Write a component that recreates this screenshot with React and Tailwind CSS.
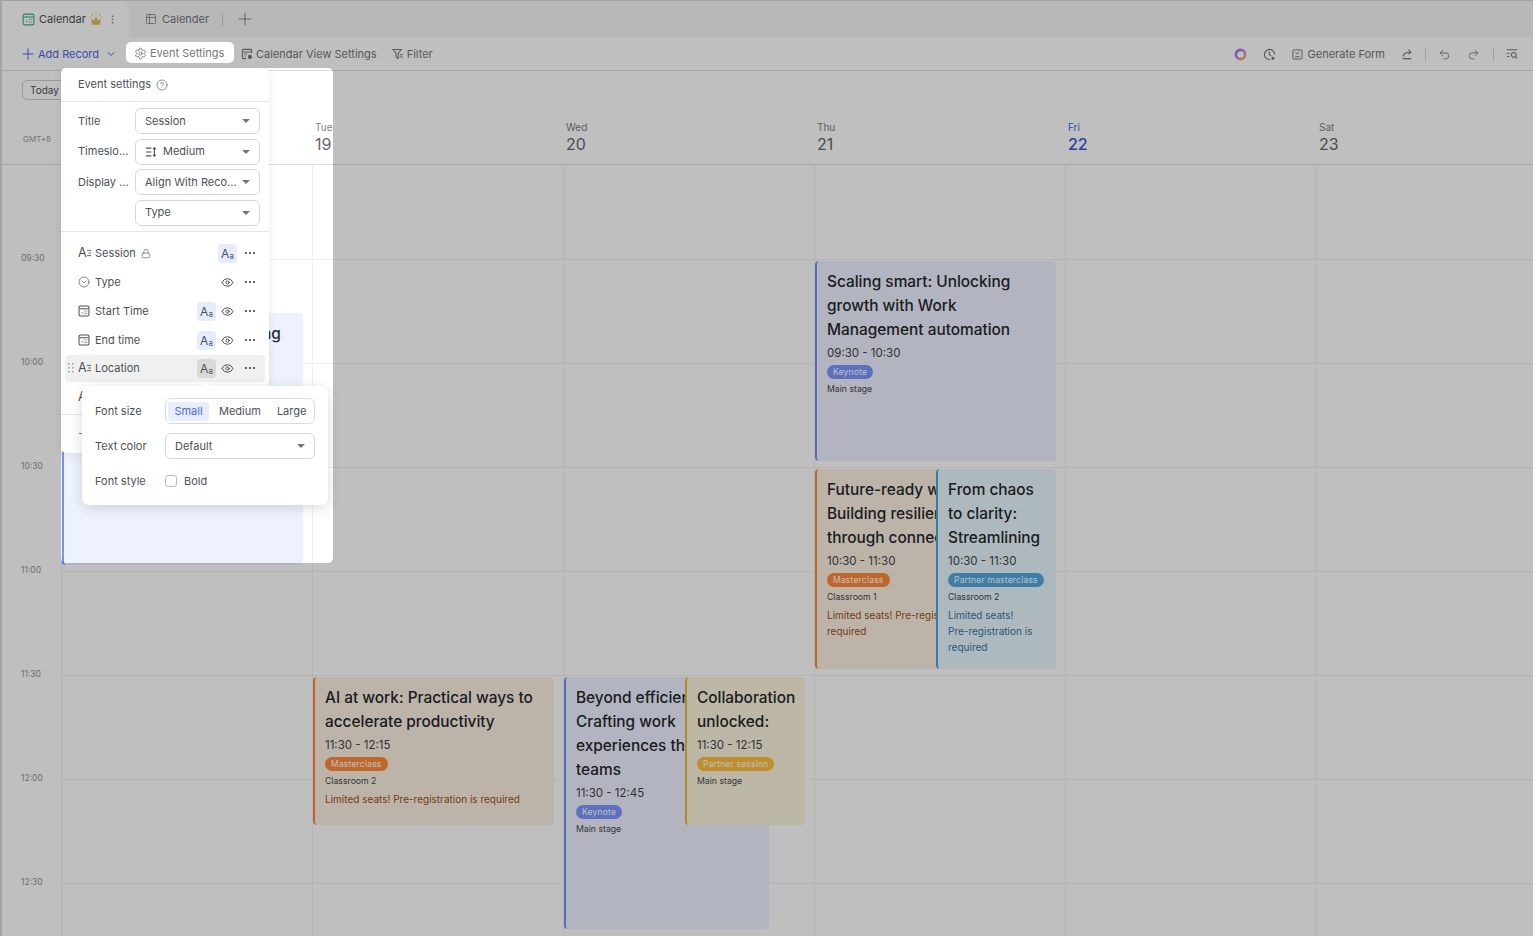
import React from "react";
import {
  Plus, ChevronDown, Settings, Undo2, Redo2, Eye, Lock, Ellipsis, CircleHelp, CircleChevronDown,
  Table2, EllipsisVertical,
} from "lucide-react";

const font = { fontFamily: "Inter, 'Noto Sans', sans-serif" };

function CalIcon({ className = "" }) {
  return (
    <svg viewBox="0 0 14 14" className={className} fill="none" stroke="currentColor" strokeWidth="1.2">
      <rect x="1.2" y="1.2" width="11.6" height="11.6" rx="1.6" />
      <path d="M1.5 4.4h11" />
      <path d="M4.2 9h1.4M7.6 7h1.2M7.6 9.8h1.2M10 7h.8M10 9.8h.8" strokeWidth="1.3" />
    </svg>
  );
}

function Crown() {
  return (
    <svg viewBox="0 0 14 14" className="w-[14px] h-[14px] ml-[3px]">
      <path d="M3 12.8h8l1-6.4-2.8 2L7 4.2 4.8 8.4 2 6.4z" fill="#e6bf5e" />
      <path d="M7 .4v2.6M2.2 1.6l1.4 2.2M11.8 1.6l-1.4 2.2M.4 4.6l1.7.7M13.6 4.6l-1.7.7" stroke="#f3dd9e" strokeWidth="1.4" />
    </svg>
  );
}

function FilterIcon() {
  return (
    <svg viewBox="0 0 14 14" className="w-[12px] h-[12px]" fill="none" stroke="currentColor" strokeWidth="1.2">
      <path d="M1.2 1.8h9.6L7.2 6.4v5.8L4.8 10.6V6.4zM9 8h3.6M9 10.4h3.6" />
    </svg>
  );
}

function CalSettingsIcon() {
  return (
    <svg viewBox="0 0 14 14" className="w-[12px] h-[12px]" fill="none" stroke="currentColor" strokeWidth="1.2">
      <path d="M6 12.4H2.6a1 1 0 0 1-1-1V2.6a1 1 0 0 1 1-1h8.8a1 1 0 0 1 1 1V6" />
      <path d="M1.6 4.6h10.8M4 7h3M4 9.4h1.6" />
      <circle cx="10.4" cy="10.4" r="1.8" fill="currentColor" />
    </svg>
  );
}

function Ring() {
  return (
    <svg viewBox="0 0 14 14" className="w-[13px] h-[13px]" fill="none">
      <defs>
        <linearGradient id="ringGrad" x1="0" y1="0" x2="1" y2="1">
          <stop offset="0" stopColor="#8a70f5" />
          <stop offset="0.5" stopColor="#cf8ad8" />
          <stop offset="1" stopColor="#ffa65c" />
        </linearGradient>
      </defs>
      <circle cx="7" cy="7" r="5" stroke="url(#ringGrad)" strokeWidth="2.8" />
    </svg>
  );
}

function ClockPlay() {
  return (
    <svg viewBox="0 0 14 14" className="w-[13px] h-[13px]" fill="none" stroke="currentColor" strokeWidth="1.2">
      <path d="M7.6 12.4A5.5 5.5 0 1 1 12.5 7" />
      <path d="M6.8 3.8v3.4l2 1.2" />
      <path d="M9.6 9.4l3 1.6-3 1.8z" fill="currentColor" strokeWidth="0.6" />
    </svg>
  );
}

function FormIcon() {
  return (
    <svg viewBox="0 0 14 14" className="w-[11px] h-[11px]" fill="none" stroke="currentColor" strokeWidth="1.2">
      <rect x="1.2" y="1.2" width="11.6" height="11.6" rx="1.2" />
      <path d="M4.2 4.4l2 2 3.4-2.8M4 9.8h6" />
    </svg>
  );
}

function ShareIcon() {
  return (
    <svg viewBox="0 0 14 14" className="w-[12px] h-[12px]" fill="none" stroke="currentColor" strokeWidth="1.2">
      <path d="M2 12.4h10M2.4 9.8C3 6.6 5.6 4.8 11 4.6M8.6 1.8 11.6 4.6 8.8 7.4" />
    </svg>
  );
}

function SearchList() {
  return (
    <svg viewBox="0 0 14 14" className="w-[12px] h-[12px]" fill="none" stroke="currentColor" strokeWidth="1.2">
      <path d="M1 2h12M1 6h3M1 10h3" />
      <circle cx="9" cy="8" r="2.8" />
      <path d="M11 10.2l1.8 1.8" />
    </svg>
  );
}

function DensityIcon() {
  return (
    <svg viewBox="0 0 14 14" className="w-[12px] h-[12px]" fill="none" stroke="currentColor" strokeWidth="1.3">
      <path d="M1 2.5h6.5M1 7h6.5M1 11.5h6.5M11 2v10M9.4 3.6 11 2l1.6 1.6M9.4 10.4 11 12l1.6-1.6" />
    </svg>
  );
}

function Grip({ className = "" }) {
  return (
    <svg viewBox="0 0 6 12" className={className} fill="currentColor">
      <rect x="0" y="1" width="1.6" height="1.6" /><rect x="4" y="1" width="1.6" height="1.6" />
      <rect x="0" y="5" width="1.6" height="1.6" /><rect x="4" y="5" width="1.6" height="1.6" />
      <rect x="0" y="9" width="1.6" height="1.6" /><rect x="4" y="9" width="1.6" height="1.6" />
    </svg>
  );
}

function TextFieldIcon() {
  return (
    <span className="flex items-center w-[13px] mr-[4px] text-[12.5px] leading-none text-[#4d5156]">
      <span>A</span>
      <svg viewBox="0 0 5 8" className="w-[5px] h-[8px]" stroke="currentColor" strokeWidth="1">
        <path d="M0 1h5M1.5 4h3.5M0 7h5" />
      </svg>
    </span>
  );
}

function Caret() {
  return <span className="ml-auto w-0 h-0 border-x-[4px] border-x-transparent border-t-[4px] border-t-[#73777d]" />;
}

const hours = ["09:30", "10:00", "10:30", "11:00", "11:30", "12:00", "12:30"];
const days = [
  { d: "Mon", n: "18" },
  { d: "Tue", n: "19" },
  { d: "Wed", n: "20" },
  { d: "Thu", n: "21" },
  { d: "Fri", n: "22", today: true },
  { d: "Sat", n: "23" },
];

const tone = {
  blue: { card: "bg-[#eef2ff] border-l-[#7490fa]", pill: "bg-[#7b96ff]", note: "text-[#4a6df5]" },
  orange: { card: "bg-[#fcf1e2] border-l-[#f58a3a]", pill: "bg-[#ff8a3a]", note: "text-[#9c4f18]" },
  cyan: { card: "bg-[#e9f7fe] border-l-[#4fa6dc]", pill: "bg-[#53a9e0]", note: "text-[#2f76ab]" },
  yellow: { card: "bg-[#fdf4dc] border-l-[#f0b638]", pill: "bg-[#ffbe3d]", note: "text-[#a87b16]" },
};

const events = [
  { col: 2, row: 3, span: 5, t: "blue", place: "ml-px mr-[9px]", title: "Welcome: Future of working together at scale", time: "09:45 - 11:00", tag: "Keynote", loc: "Main stage" },
  { col: 5, row: 2, span: 4, t: "blue", place: "ml-px mr-[9px]", title: "Scaling smart: Unlocking growth with Work Management automation", time: "09:30 - 10:30", tag: "Keynote", loc: "Main stage" },
  { col: 5, row: 6, span: 4, t: "orange", place: "ml-px mr-[45px]", title: "Future-ready work: Building resilience through connection", time: "10:30 - 11:30", tag: "Masterclass", loc: "Classroom 1", note: true },
  { col: 5, row: 6, span: 4, t: "cyan", place: "ml-[122px] mr-[9px] z-10", title: "From chaos to clarity: Streamlining", time: "10:30 - 11:30", tag: "Partner masterclass", loc: "Classroom 2", note: true },
  { col: 3, row: 10, span: 3, t: "orange", place: "ml-px mr-[9px]", title: "AI at work: Practical ways to accelerate productivity", time: "11:30 - 12:15", tag: "Masterclass", loc: "Classroom 2", note: true },
  { col: 4, row: 10, span: 5, t: "blue", place: "ml-px mr-[45px]", title: "Beyond efficiency: Crafting work experiences that inspire teams", time: "11:30 - 12:45", tag: "Keynote", loc: "Main stage" },
  { col: 4, row: 10, span: 3, t: "yellow", place: "ml-[122px] mr-[9px] z-10", title: "Collaboration unlocked:", time: "11:30 - 12:15", tag: "Partner session", loc: "Main stage" },
];

function EventCard({ e }) {
  const c = tone[e.t];
  return (
    <div
      style={{ gridColumn: e.col, gridRow: `${e.row} / span ${e.span}` }}
      className={`relative mt-[2px] mb-[6px] rounded-[4px] border-l-2 pl-[10px] pr-[10px] pt-[9px] overflow-hidden ${c.card} ${e.place}`}
    >
      <div className="text-[15.4px] leading-[24px] font-medium text-[#24272c]">{e.title}</div>
      <div className="text-[11.5px] leading-[22px] text-[#3f4349]">{e.time}</div>
      <div className="flex mt-px">
        <span className={`h-[14px] px-[6px] rounded-full text-[8.5px] leading-[14px] text-white tracking-[0.2px] whitespace-nowrap ${c.pill}`}>{e.tag}</span>
      </div>
      <div className="mt-[2px] text-[8.7px] leading-[17px] text-[#43474d]">{e.loc}</div>
      {e.note && (
        <div className={`mt-px text-[10px] leading-[16px] ${c.note}`}>
          Limited seats! <span className="whitespace-nowrap">Pre-registration</span> is required
        </div>
      )}
    </div>
  );
}

function Select({ children }) {
  return (
    <div className="flex items-center h-[26px] w-[125px] px-[9px] rounded-[6px] border border-[#d4d7db] text-[11px] text-[#4d5156] bg-white">
      {children}
      <Caret />
    </div>
  );
}

function Aa({ active, tone: t = "bg-[#e6ebff]" }) {
  return (
    <span className={`flex items-end justify-center w-[19px] h-[19px] rounded-[4px] text-[#4d5156] pb-[3px] ${active ? t : ""}`}>
      <span className="text-[12px] leading-none">A</span>
      <span className="text-[8px] leading-none">a</span>
    </span>
  );
}

function FieldRow({ icon, name, lock, aa, eye, hover }) {
  return (
    <div className={`flex items-center h-[27px] mx-[4px] pl-[3px] pr-[8px] rounded-[4px] text-[11px] text-[#4d5156] ${hover ? "-mt-px bg-[#f0f0f0]" : ""}`}>
      <Grip className={`w-[6px] h-[12px] mr-[4px] text-[#a3a6aa] ${hover ? "" : "invisible"}`} />
      {icon}
      <span>{name}</span>
      {lock && <Lock className="w-[10px] h-[11px] ml-[5px] text-[#5f6368]" strokeWidth={1.6} />}
      <span className="ml-auto flex items-center">
        {aa && <Aa active tone={hover ? "bg-[#d9d9d9]" : "bg-[#e6ebff]"} />}
        {eye && <Eye className="w-[13px] h-[13px] ml-[5px] text-[#3f4349]" strokeWidth={1.7} />}
        <Ellipsis className={`w-[14px] h-[14px] text-[#3f4349] ${eye ? "ml-[9px]" : "ml-[6px]"}`} strokeWidth={1.8} />
      </span>
    </div>
  );
}

const dateIcon = <CalIcon className="w-[12px] h-[12px] mr-[5px] text-[#4d5156]" />;

export default function App() {
  const cells = [];
  for (let c = 0; c < 6; c++) {
    cells.push(<div key={`top${c}`} style={{ gridColumn: c + 2, gridRow: 1 }} className="border-l border-[#f0f0f0]" />);
    hours.forEach((h, i) => {
      cells.push(
        <div key={`${c}-${i}`} style={{ gridColumn: c + 2, gridRow: `${2 + i * 2} / span 2` }} className="border-l border-t border-[#f0f0f0]" />
      );
    });
  }
  return (
    <div style={font} className="relative w-[1533px] h-[936px] overflow-hidden bg-white">
      <div className="flex flex-col h-full border-l-2 border-t border-[#d8d8d8]">
        <div className="flex items-stretch h-[36px] bg-[#f6f6f6] shrink-0">
          <div className="flex items-center w-[127px] pl-[20px] bg-white rounded-tr-[8px] text-[11px] text-[#4d5156]">
            <CalIcon className="w-[13px] h-[13px] mr-[4px] text-[#3fa88f]" />
            <span>Calendar</span>
            <Crown />
            <EllipsisVertical className="w-[11px] h-[11px] ml-[4px] text-[#8b8f94]" />
          </div>
          <div className="flex items-center pl-[16px] text-[11px] text-[#73777d]">
            <Table2 className="w-[12px] h-[12px] mr-[5px]" strokeWidth={1.5} />
            <span>Calender</span>
            <span className="w-px h-[13px] bg-[#cfcfcf] ml-[13px] mr-[15px]" />
            <Plus className="w-[20px] h-[20px] -ml-[3px]" strokeWidth={1.1} />
          </div>
        </div>
        <div className="relative flex items-center h-[34px] shrink-0 pl-[21px] pr-[15px] pt-px border-b border-[#dddddd] text-[11px] text-[#73777d]">
          <span className="flex items-center text-[#4a68e8]">
            <Plus className="w-[18px] h-[18px] -ml-[4px] mr-px" strokeWidth={1.4} />
            <span>Add Record</span>
            <ChevronDown className="w-[12px] h-[12px] ml-[6px]" strokeWidth={2} />
          </span>
          <span className="w-[108px] ml-[10px]" />
          <span className="flex items-center gap-[3px] ml-[6px]"><CalSettingsIcon />Calendar View Settings</span>
          <span className="flex items-center gap-[3px] ml-[15px]"><FilterIcon />Filter</span>
          <span className="ml-auto flex items-center">
            <Ring />
            <span className="ml-[16px]"><ClockPlay /></span>
            <span className="flex items-center gap-[5px] ml-[16px]"><FormIcon />Generate Form</span>
            <span className="ml-[16px]"><ShareIcon /></span>
            <span className="w-px h-[13px] bg-[#d4d4d4] ml-[12px]" />
            <Undo2 className="w-[13px] h-[13px] ml-[12px]" strokeWidth={1.5} />
            <Redo2 className="w-[13px] h-[13px] ml-[16px]" strokeWidth={1.5} />
            <span className="w-px h-[13px] bg-[#d4d4d4] ml-[13px]" />
            <span className="ml-[12px]"><SearchList /></span>
          </span>
        </div>
        <div className="grid grid-cols-[59px_repeat(6,251px)] h-[94px] shrink-0 border-b border-[#dddddd]">
          <div className="pl-[20px] pt-[9px]">
            <div className="flex items-center w-[60px] h-[20px] pl-[7px] rounded-[5px] border border-[#cfcfcf] text-[10px] text-[#4d5156]">Today</div>
            <div className="mt-[33px] pl-px text-[8px] leading-[12px] text-[#9a9ea3]">GMT+8</div>
          </div>
          {days.map((d) => (
            <div key={d.d} className="pl-[3px] pt-[49px]">
              <div className={`text-[10px] leading-[14px] ${d.today ? "text-[#3f62f0]" : "text-[#7d8186]"}`}>{d.d}</div>
              <div className={`text-[16px] leading-[20px] ${d.today ? "text-[#3556e0] font-medium" : "text-[#63676d]"}`}>{d.n}</div>
            </div>
          ))}
        </div>
        <div className="flex-1 overflow-hidden">
          <div className="grid grid-cols-[59px_repeat(6,251px)] grid-rows-[94px_repeat(14,52px)]">
            {hours.map((h, i) => (
              <div key={h} style={{ gridColumn: 1, gridRow: 2 + i * 2 }} className="-mt-[7px] pl-[19px] text-[8.5px] leading-[12px] text-[#8f9398]">{h}</div>
            ))}
            {cells}
            {events.map((e, i) => <EventCard key={i} e={e} />)}
          </div>
        </div>
      </div>

      {/* dimming layer: the spread shadow darkens all but the spotlighted panel */}
      <div className="absolute left-[61px] top-[68px] w-[272px] h-[495px] rounded-[5px] shadow-[0_0_0_2000px_rgba(0,0,0,0.25)] z-20" />

      <div className="absolute left-[126px] top-[42px] w-[108px] h-[21px] z-30 flex items-center pl-[8px] pt-[2px] gap-[3px] rounded-[5px] bg-white text-[11px] text-[#73777d]">
        <Settings className="w-[13px] h-[13px] text-[#63676d]" strokeWidth={1.5} />
        <span>Event Settings</span>
      </div>

      <div className="absolute left-[61px] top-[68px] w-[208px] h-[385px] z-30 rounded-[5px] bg-white shadow-[0_2px_10px_rgba(0,0,0,0.08)] flex flex-col">
        <div className="flex items-center h-[34px] pl-[17px] border-b border-[#e4e4e4] text-[11px] text-[#4d5156] shrink-0">
          <span>Event settings</span>
          <CircleHelp className="w-[12px] h-[12px] ml-[5px] text-[#5f6368]" strokeWidth={1.4} />
        </div>
        <div className="grid grid-cols-[57px_125px] gap-y-[4.5px] pl-[17px] pt-[6px] pb-[5px] items-center border-b border-[#e4e4e4] text-[11px] text-[#4d5156]">
          <span>Title</span>
          <Select>Session</Select>
          <span>Timeslo...</span>
          <Select><DensityIcon /><span className="ml-[6px]">Medium</span></Select>
          <span>Display ...</span>
          <Select>Align With Reco...</Select>
          <span />
          <Select>Type</Select>
        </div>
        <div className="flex flex-col gap-[2px] pt-[8px]">
          <FieldRow icon={<TextFieldIcon />} name="Session" lock aa />
          <FieldRow icon={<CircleChevronDown className="w-[12px] h-[12px] mr-[5px] text-[#4d5156]" strokeWidth={1.4} />} name="Type" eye />
          <FieldRow icon={dateIcon} name="Start Time" aa eye />
          <FieldRow icon={dateIcon} name="End time" aa eye />
          <FieldRow icon={<TextFieldIcon />} name="Location" aa eye hover />
          <FieldRow icon={<TextFieldIcon />} name="Abstract" />
        </div>
        <div className="flex items-center flex-1 mt-[3px] pl-[16px] border-t border-[#e4e4e4] text-[#4d5156]">
          <Plus className="w-[11px] h-[11px]" strokeWidth={1.5} />
        </div>
      </div>

      <div className="absolute left-[82px] top-[386px] w-[246px] h-[119px] z-40 rounded-[7px] bg-white shadow-[0_3px_14px_rgba(0,0,0,0.14)] px-[13px] pt-[12px] text-[11px] text-[#4d5156]">
        <span className="absolute -top-[3px] left-[120px] w-[7px] h-[7px] rotate-45 bg-white" />
        <div className="flex items-center h-[26px]">
          <span className="w-[70px]">Font size</span>
          <div className="flex items-center w-[150px] h-[26px] rounded-[6px] border border-[#d9dbde] pl-[2px]">
            <span className="flex items-center justify-center w-[41px] h-[19px] rounded-[3px] bg-[#e8edff] text-[#4a68e8]">Small</span>
            <span className="ml-[10px]">Medium</span>
            <span className="ml-[16px]">Large</span>
          </div>
        </div>
        <div className="flex items-center h-[26px] mt-[9px]">
          <span className="w-[70px]">Text color</span>
          <div className="flex items-center w-[150px] h-[26px] px-[9px] rounded-[6px] border border-[#d4d7db]">
            Default
            <Caret />
          </div>
        </div>
        <div className="flex items-center h-[26px] mt-[9px]">
          <span className="w-[70px]">Font style</span>
          <span className="w-[12px] h-[12px] rounded-[3px] border border-[#b9bcc0] mr-[7px]" />
          <span>Bold</span>
        </div>
      </div>
    </div>
  );
}
